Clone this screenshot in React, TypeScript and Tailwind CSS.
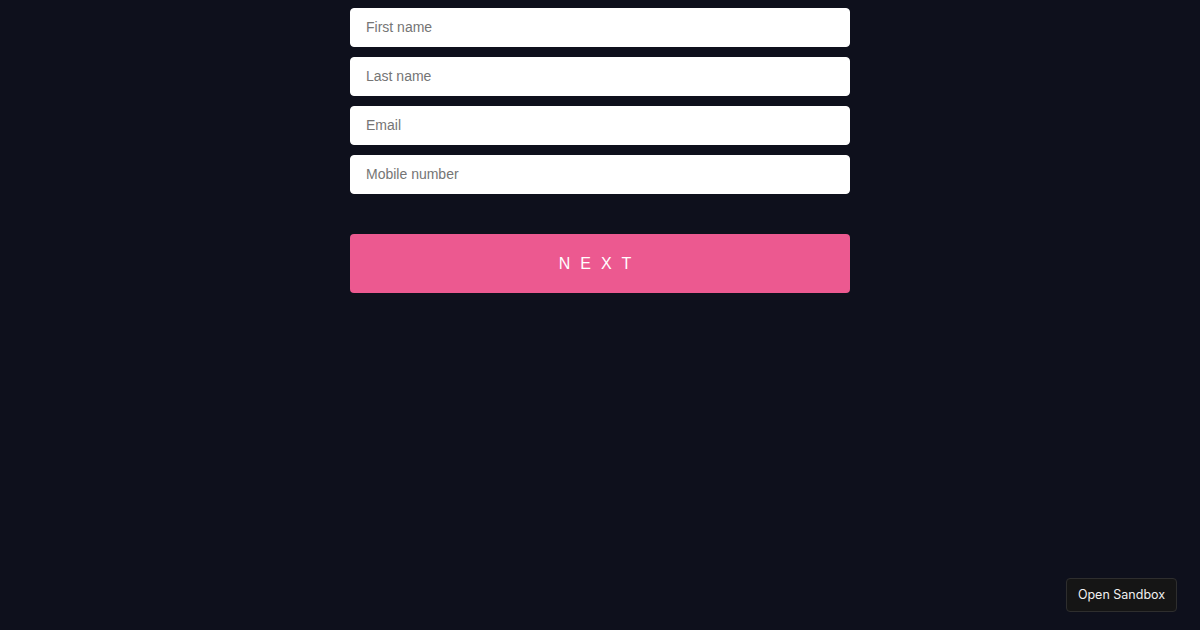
import React from "react";

const fields = ["First name", "Last name", "Email", "Mobile number"];

export default function App() {
  return (
    <div
      className="relative min-h-[630px] w-full bg-[#0e101c]"
      style={{ fontFamily: '"Liberation Sans", Arial, sans-serif' }}
    >
      <form className="mx-auto flex w-[500px] flex-col pt-[8px]">
        {fields.map((f) => (
          <input
            key={f}
            placeholder={f}
            className="mb-[10px] h-[39px] w-full rounded-[4px] border border-white bg-white px-[15px] pb-[2px] text-[14px] text-black outline-none placeholder:text-[#757575]"
          />
        ))}
        <button
          type="button"
          className="mt-[30px] h-[59px] w-full rounded-[4px] bg-[#ec5990] text-[16px] uppercase tracking-[10px] text-white"
        >
          Next
        </button>
      </form>
      <button
        type="button"
        className="absolute left-[1066px] top-[578px] h-[34px] w-[111px] rounded-[4px] border border-[#2e2e2e] bg-[#151515] text-[12.5px] text-[#f0f0f0]"
        style={{ fontFamily: 'Inter, "Liberation Sans", sans-serif' }}
      >
        Open Sandbox
      </button>
    </div>
  );
}
